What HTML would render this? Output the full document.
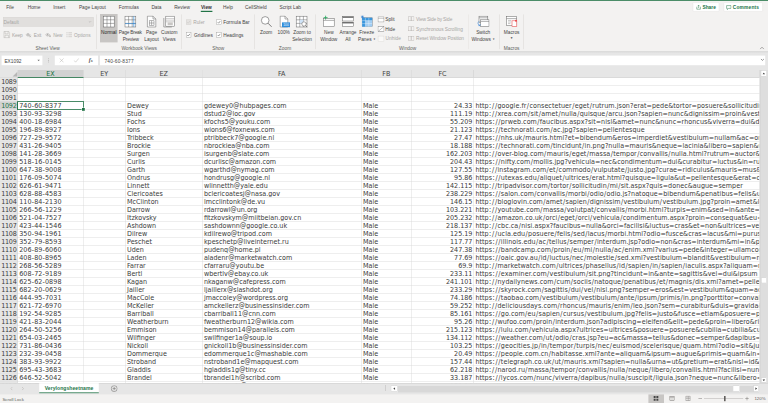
<!DOCTYPE html><html><head><meta charset="utf-8"><title>Excel</title><style>
*{box-sizing:border-box;margin:0;padding:0}
html,body{width:768px;height:403px;overflow:hidden;background:#f3f2f1}
#app{position:absolute;left:0;top:0;width:1920px;height:1008px;transform:scale(0.4);transform-origin:0 0;font-family:"Liberation Sans",sans-serif;font-size:12px;color:#444;background:#e6e6e6;overflow:hidden}
.abs{position:absolute}
#ribbon{position:absolute;left:0;top:0;width:1920px;height:128px;background:#f3f2f1;border-top:2.3px solid #217346}
#ribshadow{position:absolute;left:0;top:128px;width:1920px;height:5px;background:linear-gradient(#d6d6d6,#e6e6e6)}
.tab{position:absolute;top:11px;height:16px;line-height:16px;width:120px;margin-left:-60px;text-align:center;font-size:12px;color:#444;white-space:nowrap}
.tab.sel{color:#333;font-weight:bold}
.lbl{position:absolute;height:16px;line-height:16px;width:140px;margin-left:-70px;text-align:center;font-size:12px;color:#444;white-space:nowrap}
.lt{position:absolute;height:16px;line-height:16px;font-size:12px;color:#444;white-space:nowrap}
.dis{color:#a8a6a4}
.glabel{position:absolute;top:112px;height:16px;line-height:16px;width:160px;margin-left:-80px;text-align:center;font-size:12px;color:#605e5c;white-space:nowrap}
.sep{position:absolute;top:36px;height:87px;width:1px;background:#d2d0ce}
.ico{position:absolute}
.cb{position:absolute;width:13px;height:13px;border:1px solid #9a9896;background:#fff}
.cb.dis{border-color:#d2d0ce;background:#e5e3e1}
#grid{position:absolute;left:0;top:175px;width:1898.5px;height:782.5px;background:#fff;overflow:hidden}
.ch{position:absolute;top:0;height:18px;line-height:19px;text-align:center;font-family:"DejaVu Sans",sans-serif;font-size:16px;color:#444;background:#e6e6e6;border-right:1px solid #c6c6c6}
.rh{position:absolute;left:0;width:44px;height:20px;line-height:20px;text-align:center;font-family:"DejaVu Sans",sans-serif;font-size:16px;color:#3a3a3a;background:#e6e6e6;border-bottom:1px solid #c6c6c6;letter-spacing:-0.6px}
.c{position:absolute;height:20px;line-height:21px;font-family:"DejaVu Sans",sans-serif;font-size:16px;color:#3a3a3a;white-space:nowrap;overflow:hidden}
.c i{font-style:normal;letter-spacing:1.9px;margin-left:.95px;margin-right:-.95px}
.vl{position:absolute;top:19px;width:1px;height:770px;background:#d4d4d4}
.hl{position:absolute;left:44px;height:1px;width:1860px;background:#d4d4d4}
</style></head><body><div id="app">
<div id="ribbon"></div><div id="ribshadow"></div>
<div class="tab" style="left:25.0px">File</div>
<div class="tab" style="left:85.2px">Home</div>
<div class="tab" style="left:148.1px">Insert</div>
<div class="tab" style="left:231.0px">Page Layout</div>
<div class="tab" style="left:322.2px">Formulas</div>
<div class="tab" style="left:391.2px">Data</div>
<div class="tab" style="left:455.0px">Review</div>
<div class="tab sel" style="left:516.0px">View</div>
<div class="tab" style="left:570.0px">Help</div>
<div class="tab" style="left:639.8px">CellShield</div>
<div class="tab" style="left:725.6px">Script Lab</div>
<div class="abs" style="left:502px;top:26.800px;width:29px;height:3px;background:#217346"></div>
<div class="abs" style="left:1732px;top:6px;width:66px;height:23px;background:#fff;border:1px solid #e1dfdd;border-radius:2px"></div>
<svg class="ico" style="left:1740px;top:11px" width="14" height="14" viewBox="0 0 14 14"><path d="M2 6v6h9V6M6.5 9V2M4 4.5L6.5 2 9 4.5" fill="none" stroke="#217346" stroke-width="1.2"/></svg>
<div class="lt" style="left:1756px;top:11px;color:#217346;font-weight:bold;letter-spacing:0.1px">Share</div>
<div class="abs" style="left:1809px;top:6px;width:98px;height:23px;background:#fff;border:1px solid #e1dfdd;border-radius:2px"></div>
<svg class="ico" style="left:1814.500px;top:12px" width="14" height="14" viewBox="0 0 14 14"><path d="M1.5 2h11v7h-6l-3 3v-3h-2z" fill="none" stroke="#217346" stroke-width="1.2"/></svg>
<div class="lt" style="left:1832px;top:11px;color:#217346;font-weight:bold;letter-spacing:0.5px">Comments</div>
<svg class="ico" style="left:1899px;top:116px" width="12" height="8" viewBox="0 0 12 8"><path d="M1 7l5-5 5 5" fill="none" stroke="#605e5c" stroke-width="1.3"/></svg>
<div class="abs" style="left:8px;top:43px;width:226px;height:23px;background:#e1dfdd;border:1px solid #d2d0ce"></div>
<div class="lt dis" style="left:9px;top:47px">Default</div>
<svg class="ico" style="left:221px;top:52px" width="8" height="5" viewBox="0 0 8 5"><path d="M0.5 0.5l3.5 3.5 3.5-3.5" fill="none" stroke="#a19f9d" stroke-width="1"/></svg>
<svg class="ico" style="left:8px;top:77px" width="18" height="19" viewBox="0 0 16 16" preserveAspectRatio="none"><path d="M1.5 1.5h11l2 2v11h-13z M4 1.5v5h7v-5 M4 14.5v-5h8v5" fill="none" stroke="#b3b0ad" stroke-width="1"/></svg>
<div class="lt dis" style="left:30px;top:81px;letter-spacing:-0.4px">Keep</div>
<svg class="ico" style="left:64px;top:80px" width="16" height="14" viewBox="0 0 16 14"><path d="M1 7c2-4 8-4 10 0-2 4-8 4-10 0z M9 9l5 4 M14 9l-5 4" fill="none" stroke="#a8a6a4" stroke-width="1.5"/><circle cx="6" cy="7" r="1.8" fill="#a8a6a4"/></svg>
<div class="lt dis" style="left:84.500px;top:81px;letter-spacing:-0.3px">Exit</div>
<svg class="ico" style="left:113px;top:80px" width="16" height="14" viewBox="0 0 16 14"><path d="M1 7c2-4 8-4 10 0-2 4-8 4-10 0z M12 8v5 M9.5 10.5h5" fill="none" stroke="#a8a6a4" stroke-width="1.5"/><circle cx="6" cy="7" r="1.8" fill="#a8a6a4"/></svg>
<div class="lt dis" style="left:133px;top:81px;letter-spacing:-0.5px">New</div>
<svg class="ico" style="left:165px;top:80px" width="16" height="14" viewBox="0 0 16 14"><path d="M1 2h3 M6 2h9 M1 7h3 M6 7h9 M1 12h3 M6 12h9" fill="none" stroke="#b3b0ad" stroke-width="1.4"/></svg>
<div class="lt dis" style="left:185px;top:81px">Options</div>
<div class="glabel" style="left:119px">Sheet View</div>
<div class="sep" style="left:240.5px"></div>
<div class="abs" style="left:250px;top:35px;width:44px;height:71px;background:#c8c6c4"></div>
<svg class="ico" style="left:256px;top:38px" width="32" height="32" viewBox="0 0 32 32"><rect x="2.5" y="2.5" width="27" height="27" fill="#fff" stroke="#5e5e5e" stroke-width="1.2"/><path d="M2.5 11.5h27M2.5 20.5h27M11.5 2.5v27M20.5 2.5v27" stroke="#5e5e5e" stroke-width="1.2" fill="none"/></svg>
<div class="lbl" style="left:272px;top:72px;color:#252423">Normal</div>
<svg class="ico" style="left:310px;top:38px" width="32" height="32" viewBox="0 0 32 32"><rect x="2.5" y="2.5" width="27" height="27" fill="#fff" stroke="#5e5e5e" stroke-width="1.2"/><path d="M2.5 11.5h27M2.5 20.5h27M11.5 2.5v27M20.5 2.5v27" stroke="#5e5e5e" stroke-width="1.2" fill="none"/><path d="M2.5 21h27M24.500 2.5v27" stroke="#2b88d8" stroke-width="1.6" fill="none"/></svg>
<div class="lbl" style="left:325.6px;top:72px;letter-spacing:-0.5px">Page Break</div><div class="lbl" style="left:327px;top:90px;letter-spacing:-0.35px">Preview</div>
<svg class="ico" style="left:363px;top:38px" width="32" height="32" viewBox="0 0 32 32"><path d="M5.5 2.5h14l7 7v20h-21z" fill="#fff" stroke="#5e5e5e" stroke-width="1.2"/><path d="M19.5 2.5v7h7" fill="none" stroke="#5e5e5e" stroke-width="1.2"/><rect x="10" y="14" width="12" height="11" fill="none" stroke="#5e5e5e" stroke-width="1.1"/><path d="M10 19.5h12M16 14v11" stroke="#5e5e5e" stroke-width="1.1"/></svg>
<div class="lbl" style="left:378.8px;top:72px">Page</div><div class="lbl" style="left:378.8px;top:90px">Layout</div>
<svg class="ico" style="left:407px;top:38px" width="32" height="32" viewBox="0 0 32 32"><rect x="7.5" y="2.5" width="22" height="25" fill="#fff" stroke="#5e5e5e" stroke-width="1.2"/><path d="M7.5 8.5h22M7.5 12.5h22M7.5 16.5h22" stroke="#8a8886" stroke-width="1"/><path d="M2.5 7v22.5h20" fill="none" stroke="#5e5e5e" stroke-width="1.2"/><rect x="12" y="18" width="13" height="7" fill="#c8c6c4"/></svg>
<div class="lbl" style="left:423px;top:72px">Custom</div><div class="lbl" style="left:423px;top:90px">Views</div>
<div class="glabel" style="left:348px">Workbook Views</div>
<div class="sep" style="left:453px"></div>
<div class="cb dis" style="left:465px;top:49px"></div><svg class="ico" style="left:467px;top:51px" width="9" height="9" viewBox="0 0 9 9"><path d="M1 4.5l2.5 2.5 4.5-5.5" fill="none" stroke="#c8c6c4" stroke-width="1.3"/></svg>
<div class="lt dis" style="left:483px;top:47px">Ruler</div>
<div class="cb" style="left:465px;top:81px"></div><svg class="ico" style="left:467px;top:83px" width="9" height="9" viewBox="0 0 9 9"><path d="M1 4.5l2.5 2.5 4.5-5.5" fill="none" stroke="#444" stroke-width="1.3"/></svg>
<div class="lt" style="left:485px;top:81px">Gridlines</div>
<div class="cb" style="left:541px;top:49px"></div><svg class="ico" style="left:543px;top:51px" width="9" height="9" viewBox="0 0 9 9"><path d="M1 4.5l2.5 2.5 4.5-5.5" fill="none" stroke="#444" stroke-width="1.3"/></svg>
<div class="lt" style="left:558px;top:47px">Formula Bar</div>
<div class="cb" style="left:541px;top:81px"></div><svg class="ico" style="left:543px;top:83px" width="9" height="9" viewBox="0 0 9 9"><path d="M1 4.5l2.5 2.5 4.5-5.5" fill="none" stroke="#444" stroke-width="1.3"/></svg>
<div class="lt" style="left:558px;top:81px">Headings</div>
<div class="glabel" style="left:545.6px">Show</div>
<div class="sep" style="left:636px"></div>
<svg class="ico" style="left:650px;top:38px" width="32" height="32" viewBox="0 0 32 32"><circle cx="13" cy="13" r="9.5" fill="#fff" stroke="#5e5e5e" stroke-width="1.5"/><path d="M20 20l9 9" stroke="#5e5e5e" stroke-width="2"/></svg>
<div class="lbl" style="left:665.6px;top:72px">Zoom</div>
<svg class="ico" style="left:694px;top:38px" width="32" height="32" viewBox="0 0 32 32"><path d="M6.5 2.5h12l7 7v20h-19z" fill="#fff" stroke="#5e5e5e" stroke-width="1.2"/><path d="M18.5 2.5v7h7" fill="none" stroke="#5e5e5e" stroke-width="1.2"/><rect x="11" y="18" width="20" height="12" fill="#2f8ddb"/><text x="21" y="27.5" font-size="8" font-family="Liberation Sans, sans-serif" fill="#fff" text-anchor="middle">100</text></svg>
<div class="lbl" style="left:709.4px;top:72px">100%</div>
<svg class="ico" style="left:738px;top:38px" width="32" height="32" viewBox="0 0 32 32"><rect x="2.5" y="2.5" width="27" height="27" fill="#fff" stroke="#5e5e5e" stroke-width="1.2"/><path d="M2.5 11.5h27M2.5 20.5h27M11.5 2.5v27M20.5 2.5v27" stroke="#5e5e5e" stroke-width="1.2" fill="none"/><rect x="11.5" y="11.5" width="9" height="9" fill="#cfe3f7"/><circle cx="22" cy="22" r="5.5" fill="#fff" stroke="#5e5e5e" stroke-width="1.3"/><path d="M26 26l4 4" stroke="#5e5e5e" stroke-width="1.8"/></svg>
<div class="lbl" style="left:755px;top:72px">Zoom to</div><div class="lbl" style="left:755px;top:90px">Selection</div>
<div class="glabel" style="left:712.5px">Zoom</div>
<div class="sep" style="left:788px"></div>
<svg class="ico" style="left:806px;top:38px" width="32" height="32" viewBox="0 0 32 32"><rect x="2.5" y="8.5" width="27" height="20" fill="#fff" stroke="#5e5e5e" stroke-width="1.2"/><path d="M2.5 13h27" stroke="#5e5e5e" stroke-width="1.2"/><path d="M8 1v10M3 6h10" stroke="#23a55a" stroke-width="2"/></svg>
<div class="lbl" style="left:822px;top:72px">New</div><div class="lbl" style="left:822px;top:90px">Window</div>
<svg class="ico" style="left:854px;top:38px" width="32" height="32" viewBox="0 0 32 32"><rect x="2.5" y="3.5" width="27" height="11" fill="#fff" stroke="#5e5e5e" stroke-width="1.2"/><rect x="2.5" y="3.5" width="27" height="3" fill="#5e5e5e"/><rect x="2.5" y="17.5" width="27" height="11" fill="#fff" stroke="#5e5e5e" stroke-width="1.2"/><rect x="2.5" y="17.5" width="27" height="3" fill="#5e5e5e"/></svg>
<div class="lbl" style="left:870px;top:72px">Arrange</div><div class="lbl" style="left:870px;top:90px">All</div>
<svg class="ico" style="left:901px;top:38px" width="32" height="32" viewBox="0 0 32 32"><rect x="4.5" y="6.5" width="25" height="22" fill="#fff" stroke="#5e5e5e" stroke-width="1.2"/><rect x="4.5" y="6.5" width="25" height="22" fill="#9fcdf3"/><rect x="4.5" y="6.5" width="25" height="7" fill="#3a96dd"/><rect x="4.5" y="6.5" width="8" height="22" fill="#3a96dd"/><path d="M4.5 13.5h25M4.5 21h25M12.5 6.5v22M21 6.5v22" stroke="#fff" stroke-width="1" opacity=".9"/><path d="M5 0v8M1 4h8M2 1l6 6M8 1l-6 6" stroke="#2b7cd3" stroke-width="1.2"/></svg>
<div class="lbl" style="left:917px;top:72px">Freeze</div><div class="lbl" style="left:917px;top:90px">Panes <span style="font-size:7px;vertical-align:1px">&#9660;</span></div>
<svg class="ico" style="left:944px;top:41px" width="17" height="15" viewBox="0 0 17 15"><rect x="1" y="1" width="15" height="13" fill="#fff" stroke="#5e5e5e"/><path d="M1 4.500h15" stroke="#5e5e5e"/></svg>
<div class="lt" style="left:963px;top:41px">Split</div>
<svg class="ico" style="left:944px;top:65px" width="17" height="15" viewBox="0 0 17 15"><rect x="1" y="1" width="15" height="13" fill="#fff" stroke="#5e5e5e"/><path d="M2 13l13-11" stroke="#5e5e5e"/></svg>
<div class="lt" style="left:963px;top:66px">Hide</div>
<svg class="ico" style="left:944px;top:89px" width="17" height="15" viewBox="0 0 17 15"><rect x="1" y="1" width="15" height="13" fill="#faf9f8" stroke="#c8c6c4"/></svg>
<div class="lt dis" style="left:964px;top:88px">Unhide</div>
<svg class="ico" style="left:1020px;top:40px" width="16" height="14" viewBox="0 0 16 14"><rect x="1" y="2" width="6.5" height="10" fill="none" stroke="#b3b0ad"/><rect x="8.5" y="2" width="6.5" height="10" fill="none" stroke="#b3b0ad"/></svg>
<div class="lt dis" style="left:1040px;top:41px;letter-spacing:-0.36px">View Side by Side</div>
<svg class="ico" style="left:1020px;top:65px" width="16" height="14" viewBox="0 0 16 14"><rect x="1" y="2" width="6.5" height="10" fill="none" stroke="#b3b0ad"/><rect x="8.5" y="2" width="6.5" height="10" fill="none" stroke="#b3b0ad"/></svg>
<div class="lt dis" style="left:1040px;top:66px;letter-spacing:-0.12px">Synchronous Scrolling</div>
<svg class="ico" style="left:1020px;top:89px" width="16" height="14" viewBox="0 0 16 14"><rect x="1" y="2" width="6.5" height="10" fill="none" stroke="#b3b0ad"/><rect x="8.5" y="2" width="6.5" height="10" fill="none" stroke="#b3b0ad"/></svg>
<div class="lt dis" style="left:1040px;top:88px;letter-spacing:-0.17px">Reset Window Position</div>
<div class="sep" style="left:1170.5px;background:#e1dfdd"></div>
<svg class="ico" style="left:1192px;top:38px" width="32" height="32" viewBox="0 0 32 32"><rect x="5.5" y="2.5" width="22" height="16" fill="#fff" stroke="#5e5e5e" stroke-width="1.2"/><path d="M5.5 6.500h22" stroke="#5e5e5e" stroke-width="1.2"/><rect x="9.500" y="11.5" width="21" height="17" fill="#fff" stroke="#5e5e5e" stroke-width="1.2"/><path d="M9.5 15.5h21" stroke="#5e5e5e" stroke-width="1.2"/><path d="M6 15c-4 3-4 8 1 11M4 26h4v-4" fill="none" stroke="#2b7cd3" stroke-width="1.5"/></svg>
<div class="lbl" style="left:1208px;top:72px">Switch</div><div class="lbl" style="left:1208px;top:90px">Windows <span style="font-size:7px;vertical-align:1px">&#9660;</span></div>
<div class="glabel" style="left:1019px">Window</div>
<div class="sep" style="left:1248px"></div>
<svg class="ico" style="left:1263px;top:38px" width="32" height="32" viewBox="0 0 32 32"><rect x="3.5" y="3.5" width="25" height="22" fill="#fff" stroke="#5e5e5e" stroke-width="1.2"/><path d="M3.5 8.5h25" stroke="#5e5e5e" stroke-width="1.2"/><path d="M7 13h8M7 17h8M7 21h6" stroke="#8a8886" stroke-width="1.2"/><rect x="17" y="14" width="12" height="14" fill="#fff" stroke="#e8484a" stroke-width="1.4"/><circle cx="27" cy="14" r="2.5" fill="#e8484a"/></svg>
<div class="lbl" style="left:1279px;top:72px">Macros</div><div class="lbl" style="left:1279px;top:88px;font-size:8px">&#9660;</div>
<div class="glabel" style="left:1279px">Macros</div>
<div class="sep" style="left:1307.5px"></div>
<div class="abs" style="left:4px;top:138.500px;width:102px;height:24.500px;background:#fff"></div>
<div class="lt" style="left:11px;top:145px;font-size:12px;color:#444">EX1092</div>
<svg class="ico" style="left:93px;top:149px" width="7" height="4" viewBox="0 0 7 4"><path d="M0 0h7l-3.500 4z" fill="#777"/></svg>
<div class="abs" style="left:120px;top:146px;width:2px;height:2px;background:#b0aeac;box-shadow:0 4px 0 #b0aeac,0 8px 0 #b0aeac"></div>
<div class="abs" style="left:137px;top:138.500px;width:108px;height:24.500px;background:#fff"></div>
<svg class="ico" style="left:148px;top:145px" width="12" height="12" viewBox="0 0 12 12"><path d="M1 1l10 10M11 1l-10 10" stroke="#b3b0ad" stroke-width="1.2"/></svg>
<svg class="ico" style="left:184px;top:145px" width="14" height="12" viewBox="0 0 14 12"><path d="M1 6l4 4.500l8-9.500" fill="none" stroke="#b3b0ad" stroke-width="1.2"/></svg>
<div class="lt" style="left:222px;top:142px;font-family:'Liberation Serif',serif;font-style:italic;font-weight:bold;font-size:15px;color:#555">f<span style="font-size:10px">x</span></div>
<div class="abs" style="left:250px;top:138.500px;width:1663px;height:24.500px;background:#fff"></div>
<div class="lt" style="left:261px;top:145px;font-size:12px;letter-spacing:0.5px;color:#444">740-60-8377</div>
<svg class="ico" style="left:1901px;top:146px" width="10" height="7" viewBox="0 0 10 7"><path d="M1 1l4 4 4-4" fill="none" stroke="#444" stroke-width="1.4"/></svg>
<div id="grid">
<div class="abs" style="left:0;top:0;width:1900px;height:19px;background:#e6e6e6;border-bottom:1px solid #b4b4b4"></div>
<svg class="ico" style="left:30.500px;top:4px" width="13" height="13" viewBox="0 0 13 13"><path d="M13 0v13h-13z" fill="#b7b7b7"/></svg>
<div class="ch" style="left:44px;width:165px;background:#d2d2d2;color:#217346;">EX</div>
<div class="ch" style="left:209px;width:104.5px;">EY</div>
<div class="ch" style="left:313.5px;width:192.25px;">EZ</div>
<div class="ch" style="left:505.75px;width:398.0px;">FA</div>
<div class="ch" style="left:903.75px;width:125.0px;">FB</div>
<div class="ch" style="left:1028.75px;width:155.75px;">FC</div>
<div class="ch" style="left:1184.5px;width:715.5px;"></div>
<div class="abs" style="left:44px;top:18.400px;width:165px;height:1.900px;background:#217346"></div>
<div class="rh" style="top:19px;">1089</div>
<div class="rh" style="top:39px;">1090</div>
<div class="rh" style="top:59px;">1091</div>
<div class="rh" style="top:79px;background:#d2d2d2;color:#217346;">1092</div>
<div class="rh" style="top:99px;">1093</div>
<div class="rh" style="top:119px;">1094</div>
<div class="rh" style="top:139px;">1095</div>
<div class="rh" style="top:159px;">1096</div>
<div class="rh" style="top:179px;">1097</div>
<div class="rh" style="top:199px;">1098</div>
<div class="rh" style="top:219px;">1099</div>
<div class="rh" style="top:239px;">1100</div>
<div class="rh" style="top:259px;">1101</div>
<div class="rh" style="top:279px;">1102</div>
<div class="rh" style="top:299px;">1103</div>
<div class="rh" style="top:319px;">1104</div>
<div class="rh" style="top:339px;">1105</div>
<div class="rh" style="top:359px;">1106</div>
<div class="rh" style="top:379px;">1107</div>
<div class="rh" style="top:399px;">1108</div>
<div class="rh" style="top:419px;">1109</div>
<div class="rh" style="top:439px;">1110</div>
<div class="rh" style="top:459px;">1111</div>
<div class="rh" style="top:479px;">1112</div>
<div class="rh" style="top:499px;">1113</div>
<div class="rh" style="top:519px;">1114</div>
<div class="rh" style="top:539px;">1115</div>
<div class="rh" style="top:559px;">1116</div>
<div class="rh" style="top:579px;">1117</div>
<div class="rh" style="top:599px;">1118</div>
<div class="rh" style="top:619px;">1119</div>
<div class="rh" style="top:639px;">1120</div>
<div class="rh" style="top:659px;">1121</div>
<div class="rh" style="top:679px;">1122</div>
<div class="rh" style="top:699px;">1123</div>
<div class="rh" style="top:719px;">1124</div>
<div class="rh" style="top:739px;">1125</div>
<div class="rh" style="top:759px;">1126</div>
<div class="rh" style="top:779px;">1127</div>
<div class="abs" style="left:43px;top:19px;width:1px;height:770px;background:#c6c6c6"></div>
<div class="abs" style="left:42.5px;top:79px;width:2.5px;height:20px;background:#217346"></div>
<div class="hl" style="top:38px"></div>
<div class="hl" style="top:58px"></div>
<div class="hl" style="top:78px"></div>
<div class="hl" style="top:98px"></div>
<div class="hl" style="top:118px"></div>
<div class="hl" style="top:138px"></div>
<div class="hl" style="top:158px"></div>
<div class="hl" style="top:178px"></div>
<div class="hl" style="top:198px"></div>
<div class="hl" style="top:218px"></div>
<div class="hl" style="top:238px"></div>
<div class="hl" style="top:258px"></div>
<div class="hl" style="top:278px"></div>
<div class="hl" style="top:298px"></div>
<div class="hl" style="top:318px"></div>
<div class="hl" style="top:338px"></div>
<div class="hl" style="top:358px"></div>
<div class="hl" style="top:378px"></div>
<div class="hl" style="top:398px"></div>
<div class="hl" style="top:418px"></div>
<div class="hl" style="top:438px"></div>
<div class="hl" style="top:458px"></div>
<div class="hl" style="top:478px"></div>
<div class="hl" style="top:498px"></div>
<div class="hl" style="top:518px"></div>
<div class="hl" style="top:538px"></div>
<div class="hl" style="top:558px"></div>
<div class="hl" style="top:578px"></div>
<div class="hl" style="top:598px"></div>
<div class="hl" style="top:618px"></div>
<div class="hl" style="top:638px"></div>
<div class="hl" style="top:658px"></div>
<div class="hl" style="top:678px"></div>
<div class="hl" style="top:698px"></div>
<div class="hl" style="top:718px"></div>
<div class="hl" style="top:738px"></div>
<div class="hl" style="top:758px"></div>
<div class="hl" style="top:778px"></div>
<div class="hl" style="top:798px"></div>
<div class="vl" style="left:208px"></div>
<div class="vl" style="left:312.5px"></div>
<div class="vl" style="left:504.75px"></div>
<div class="vl" style="left:902.75px"></div>
<div class="vl" style="left:1027.75px"></div>
<div class="vl" style="left:1183.5px"></div>
<div class="c" style="left:44px;top:79px;width:164px;padding-left:4px;letter-spacing:0.25px;">740-60-8377</div>
<div class="c" style="left:313.5px;top:79px;width:191.25px;padding-left:4px;">Dewey</div>
<div class="c" style="left:505.75px;top:79px;width:397.0px;padding-left:4px;">gdewey0@hubpages.com</div>
<div class="c" style="left:903.75px;top:79px;width:124.0px;padding-left:4px;">Male</div>
<div class="c" style="left:1028.75px;top:79px;width:154.75px;padding-right:2.5px;text-align:right;">24.33</div>
<div class="c" style="left:1184.5px;top:79px;width:714.0px;padding-left:4px;letter-spacing:0.11px;">http<i>://</i>google.fr<i>/</i>consectetuer<i>/</i>eget<i>/</i>rutrum.json?erat=pede&amp;tortor=posuere&amp;sollicitudin=eget</div>
<div class="c" style="left:44px;top:99px;width:164px;padding-left:4px;letter-spacing:0.25px;">130-93-3298</div>
<div class="c" style="left:313.5px;top:99px;width:191.25px;padding-left:4px;">Stud</div>
<div class="c" style="left:505.75px;top:99px;width:397.0px;padding-left:4px;">dstud2@loc.gov</div>
<div class="c" style="left:903.75px;top:99px;width:124.0px;padding-left:4px;">Male</div>
<div class="c" style="left:1028.75px;top:99px;width:154.75px;padding-right:2.5px;text-align:right;">111.19</div>
<div class="c" style="left:1184.5px;top:99px;width:714.0px;padding-left:4px;letter-spacing:0.11px;">http<i>://</i>xrea.com<i>/</i>sit<i>/</i>amet<i>/</i>nulla<i>/</i>quisque<i>/</i>arcu.json?sapien=nunc&amp;dignissim=proin&amp;vestibulum=ac</div>
<div class="c" style="left:44px;top:119px;width:164px;padding-left:4px;letter-spacing:0.25px;">400-18-6984</div>
<div class="c" style="left:313.5px;top:119px;width:191.25px;padding-left:4px;">Fochs</div>
<div class="c" style="left:505.75px;top:119px;width:397.0px;padding-left:4px;">kfochs5@youku.com</div>
<div class="c" style="left:903.75px;top:119px;width:124.0px;padding-left:4px;">Male</div>
<div class="c" style="left:1028.75px;top:119px;width:154.75px;padding-right:2.5px;text-align:right;">55.209</div>
<div class="c" style="left:1184.5px;top:119px;width:714.0px;padding-left:4px;letter-spacing:0.11px;">https<i>://</i>prweb.com<i>/</i>faucibus.aspx?sit=nisl&amp;amet=nunc&amp;nunc=rhoncus&amp;viverra=dui&amp;dapibus=at</div>
<div class="c" style="left:44px;top:139px;width:164px;padding-left:4px;letter-spacing:0.25px;">196-89-8927</div>
<div class="c" style="left:313.5px;top:139px;width:191.25px;padding-left:4px;">Ions</div>
<div class="c" style="left:505.75px;top:139px;width:397.0px;padding-left:4px;">wions6@foxnews.com</div>
<div class="c" style="left:903.75px;top:139px;width:124.0px;padding-left:4px;">Male</div>
<div class="c" style="left:1028.75px;top:139px;width:154.75px;padding-right:2.5px;text-align:right;">21.123</div>
<div class="c" style="left:1184.5px;top:139px;width:714.0px;padding-left:4px;letter-spacing:0.11px;">https<i>://</i>technorati.com<i>/</i>ac.jpg?sapien=pellentesque</div>
<div class="c" style="left:44px;top:159px;width:164px;padding-left:4px;letter-spacing:0.25px;">727-29-9572</div>
<div class="c" style="left:313.5px;top:159px;width:191.25px;padding-left:4px;">Tribbeck</div>
<div class="c" style="left:505.75px;top:159px;width:397.0px;padding-left:4px;">ptribbeck7@google.nl</div>
<div class="c" style="left:903.75px;top:159px;width:124.0px;padding-left:4px;">Male</div>
<div class="c" style="left:1028.75px;top:159px;width:154.75px;padding-right:2.5px;text-align:right;">27.47</div>
<div class="c" style="left:1184.5px;top:159px;width:714.0px;padding-left:4px;letter-spacing:0.11px;">https<i>://</i>nhs.uk<i>/</i>mauris.html?et=bibendum&amp;eros=imperdiet&amp;vestibulum=nullam&amp;ac=orci&amp;in=est</div>
<div class="c" style="left:44px;top:179px;width:164px;padding-left:4px;letter-spacing:0.25px;">431-26-9405</div>
<div class="c" style="left:313.5px;top:179px;width:191.25px;padding-left:4px;">Brockie</div>
<div class="c" style="left:505.75px;top:179px;width:397.0px;padding-left:4px;">nbrockiea@nba.com</div>
<div class="c" style="left:903.75px;top:179px;width:124.0px;padding-left:4px;">Male</div>
<div class="c" style="left:1028.75px;top:179px;width:154.75px;padding-right:2.5px;text-align:right;">18.188</div>
<div class="c" style="left:1184.5px;top:179px;width:714.0px;padding-left:4px;letter-spacing:0.11px;">https<i>://</i>technorati.com<i>/</i>tincidunt<i>/</i>in.png?nulla=mauris&amp;neque=lacinia&amp;libero=sapien&amp;ut=nunc</div>
<div class="c" style="left:44px;top:199px;width:164px;padding-left:4px;letter-spacing:0.25px;">141-28-3669</div>
<div class="c" style="left:313.5px;top:199px;width:191.25px;padding-left:4px;">Surgen</div>
<div class="c" style="left:505.75px;top:199px;width:397.0px;padding-left:4px;">isurgenb@slate.com</div>
<div class="c" style="left:903.75px;top:199px;width:124.0px;padding-left:4px;">Male</div>
<div class="c" style="left:1028.75px;top:199px;width:154.75px;padding-right:2.5px;text-align:right;">162.203</div>
<div class="c" style="left:1184.5px;top:199px;width:714.0px;padding-left:4px;letter-spacing:0.11px;">http<i>://</i>over-blog.com<i>/</i>mauris<i>/</i>eget<i>/</i>massa<i>/</i>tempor<i>/</i>convallis<i>/</i>nulla.html?rutrum=auctor&amp;sed=ut</div>
<div class="c" style="left:44px;top:219px;width:164px;padding-left:4px;letter-spacing:0.25px;">518-16-0145</div>
<div class="c" style="left:313.5px;top:219px;width:191.25px;padding-left:4px;">Curlis</div>
<div class="c" style="left:505.75px;top:219px;width:397.0px;padding-left:4px;">dcurlisc@amazon.com</div>
<div class="c" style="left:903.75px;top:219px;width:124.0px;padding-left:4px;">Male</div>
<div class="c" style="left:1028.75px;top:219px;width:154.75px;padding-right:2.5px;text-align:right;">204.43</div>
<div class="c" style="left:1184.5px;top:219px;width:714.0px;padding-left:4px;letter-spacing:0.11px;">https<i>://</i>nifty.com<i>/</i>mollis.jpg?vehicula=nec&amp;condimentum=dui&amp;curabitur=luctus&amp;in=rutrum&amp;ac</div>
<div class="c" style="left:44px;top:239px;width:164px;padding-left:4px;letter-spacing:0.25px;">647-38-9008</div>
<div class="c" style="left:313.5px;top:239px;width:191.25px;padding-left:4px;">Garth</div>
<div class="c" style="left:505.75px;top:239px;width:397.0px;padding-left:4px;">wgarthd@nymag.com</div>
<div class="c" style="left:903.75px;top:239px;width:124.0px;padding-left:4px;">Male</div>
<div class="c" style="left:1028.75px;top:239px;width:154.75px;padding-right:2.5px;text-align:right;">127.55</div>
<div class="c" style="left:1184.5px;top:239px;width:714.0px;padding-left:4px;letter-spacing:0.11px;">http<i>://</i>instagram.com<i>/</i>et<i>/</i>commodo<i>/</i>vulputate<i>/</i>justo.jpg?curae=ridiculus&amp;mauris=mus&amp;nulla=ut</div>
<div class="c" style="left:44px;top:259px;width:164px;padding-left:4px;letter-spacing:0.25px;">176-09-5074</div>
<div class="c" style="left:313.5px;top:259px;width:191.25px;padding-left:4px;">Ondrus</div>
<div class="c" style="left:505.75px;top:259px;width:397.0px;padding-left:4px;">hondrusg@google.nl</div>
<div class="c" style="left:903.75px;top:259px;width:124.0px;padding-left:4px;">Male</div>
<div class="c" style="left:1028.75px;top:259px;width:154.75px;padding-right:2.5px;text-align:right;">95.86</div>
<div class="c" style="left:1184.5px;top:259px;width:714.0px;padding-left:4px;letter-spacing:0.11px;">https<i>://</i>utexas.edu<i>/</i>aliquet<i>/</i>ultrices<i>/</i>erat.html?quisque=ligula&amp;ut=pellentesque&amp;erat=curabitur</div>
<div class="c" style="left:44px;top:279px;width:164px;padding-left:4px;letter-spacing:0.25px;">626-61-9471</div>
<div class="c" style="left:313.5px;top:279px;width:191.25px;padding-left:4px;">Linnett</div>
<div class="c" style="left:505.75px;top:279px;width:397.0px;padding-left:4px;">wlinnetth@yale.edu</div>
<div class="c" style="left:903.75px;top:279px;width:124.0px;padding-left:4px;">Male</div>
<div class="c" style="left:1028.75px;top:279px;width:154.75px;padding-right:2.5px;text-align:right;">142.115</div>
<div class="c" style="left:1184.5px;top:279px;width:714.0px;padding-left:4px;letter-spacing:0.11px;">http<i>://</i>tripadvisor.com<i>/</i>tortor<i>/</i>sollicitudin<i>/</i>mi<i>/</i>sit.aspx?quis=donec&amp;augue=semper</div>
<div class="c" style="left:44px;top:299px;width:164px;padding-left:4px;letter-spacing:0.25px;">628-88-4583</div>
<div class="c" style="left:313.5px;top:299px;width:191.25px;padding-left:4px;">Clericoates</div>
<div class="c" style="left:505.75px;top:299px;width:397.0px;padding-left:4px;">bclericoatesj@nasa.gov</div>
<div class="c" style="left:903.75px;top:299px;width:124.0px;padding-left:4px;">Male</div>
<div class="c" style="left:1028.75px;top:299px;width:154.75px;padding-right:2.5px;text-align:right;">238.229</div>
<div class="c" style="left:1184.5px;top:299px;width:714.0px;padding-left:4px;letter-spacing:0.11px;">https<i>://</i>salon.com<i>/</i>convallis<i>/</i>morbi<i>/</i>odio<i>/</i>odio.js?natoque=bibendum&amp;penatibus=felis&amp;ut=eget</div>
<div class="c" style="left:44px;top:319px;width:164px;padding-left:4px;letter-spacing:0.25px;">110-84-2130</div>
<div class="c" style="left:313.5px;top:319px;width:191.25px;padding-left:4px;">McClinton</div>
<div class="c" style="left:505.75px;top:319px;width:397.0px;padding-left:4px;">lmcclintonk@de.vu</div>
<div class="c" style="left:903.75px;top:319px;width:124.0px;padding-left:4px;">Male</div>
<div class="c" style="left:1028.75px;top:319px;width:154.75px;padding-right:2.5px;text-align:right;">146.15</div>
<div class="c" style="left:1184.5px;top:319px;width:714.0px;padding-left:4px;letter-spacing:0.11px;">http<i>://</i>bloglovin.com<i>/</i>amet<i>/</i>sapien<i>/</i>dignissim<i>/</i>vestibulum<i>/</i>vestibulum.jpg?proin=amet&amp;lobortis=in</div>
<div class="c" style="left:44px;top:339px;width:164px;padding-left:4px;letter-spacing:0.25px;">266-56-1229</div>
<div class="c" style="left:313.5px;top:339px;width:191.25px;padding-left:4px;">Darrow</div>
<div class="c" style="left:505.75px;top:339px;width:397.0px;padding-left:4px;">rdarrowl@un.org</div>
<div class="c" style="left:903.75px;top:339px;width:124.0px;padding-left:4px;">Male</div>
<div class="c" style="left:1028.75px;top:339px;width:154.75px;padding-right:2.5px;text-align:right;">103.221</div>
<div class="c" style="left:1184.5px;top:339px;width:714.0px;padding-left:4px;letter-spacing:0.11px;">http<i>://</i>youtube.com<i>/</i>massa<i>/</i>volutpat<i>/</i>convallis<i>/</i>morbi.html?turpis=enim&amp;sed=in&amp;ante=vel&amp;in=est</div>
<div class="c" style="left:44px;top:359px;width:164px;padding-left:4px;letter-spacing:0.25px;">521-04-7527</div>
<div class="c" style="left:313.5px;top:359px;width:191.25px;padding-left:4px;">Itzkovsky</div>
<div class="c" style="left:505.75px;top:359px;width:397.0px;padding-left:4px;">fitzkovskym@miitbeian.gov.cn</div>
<div class="c" style="left:903.75px;top:359px;width:124.0px;padding-left:4px;">Male</div>
<div class="c" style="left:1028.75px;top:359px;width:154.75px;padding-right:2.5px;text-align:right;">205.232</div>
<div class="c" style="left:1184.5px;top:359px;width:714.0px;padding-left:4px;letter-spacing:0.11px;">http<i>://</i>amazon.co.uk<i>/</i>orci<i>/</i>eget<i>/</i>orci<i>/</i>vehicula<i>/</i>condimentum.aspx?proin=consequat&amp;eu=nulla&amp;ac</div>
<div class="c" style="left:44px;top:379px;width:164px;padding-left:4px;letter-spacing:0.25px;">423-44-1546</div>
<div class="c" style="left:313.5px;top:379px;width:191.25px;padding-left:4px;">Ashdown</div>
<div class="c" style="left:505.75px;top:379px;width:397.0px;padding-left:4px;">sashdownn@google.co.uk</div>
<div class="c" style="left:903.75px;top:379px;width:124.0px;padding-left:4px;">Male</div>
<div class="c" style="left:1028.75px;top:379px;width:154.75px;padding-right:2.5px;text-align:right;">218.137</div>
<div class="c" style="left:1184.5px;top:379px;width:714.0px;padding-left:4px;letter-spacing:0.11px;">http<i>://</i>cbc.ca<i>/</i>nisi.aspx?faucibus=nulla&amp;orci=facilisi&amp;luctus=cras&amp;et=non&amp;ultrices=vel&amp;augue</div>
<div class="c" style="left:44px;top:399px;width:164px;padding-left:4px;letter-spacing:0.25px;">350-94-1961</div>
<div class="c" style="left:313.5px;top:399px;width:191.25px;padding-left:4px;">Dilrew</div>
<div class="c" style="left:505.75px;top:399px;width:397.0px;padding-left:4px;">kdilrewo@tripod.com</div>
<div class="c" style="left:903.75px;top:399px;width:124.0px;padding-left:4px;">Male</div>
<div class="c" style="left:1028.75px;top:399px;width:154.75px;padding-right:2.5px;text-align:right;">125.19</div>
<div class="c" style="left:1184.5px;top:399px;width:714.0px;padding-left:4px;letter-spacing:0.11px;">http<i>://</i>ucla.edu<i>/</i>posuere<i>/</i>felis<i>/</i>sed<i>/</i>lacus<i>/</i>morbi.html?odio=fusce&amp;cras=lacus&amp;mi=purus&amp;in=est</div>
<div class="c" style="left:44px;top:419px;width:164px;padding-left:4px;letter-spacing:0.25px;">352-79-8593</div>
<div class="c" style="left:313.5px;top:419px;width:191.25px;padding-left:4px;">Peschet</div>
<div class="c" style="left:505.75px;top:419px;width:397.0px;padding-left:4px;">kpeschetp@liveinternet.ru</div>
<div class="c" style="left:903.75px;top:419px;width:124.0px;padding-left:4px;">Male</div>
<div class="c" style="left:1028.75px;top:419px;width:154.75px;padding-right:2.5px;text-align:right;">117.77</div>
<div class="c" style="left:1184.5px;top:419px;width:714.0px;padding-left:4px;letter-spacing:0.11px;">https<i>://</i>illinois.edu<i>/</i>ac<i>/</i>tellus<i>/</i>semper<i>/</i>interdum.jsp?odio=non&amp;cras=interdum&amp;mi=in&amp;porttitor</div>
<div class="c" style="left:44px;top:439px;width:164px;padding-left:4px;letter-spacing:0.25px;">206-89-6060</div>
<div class="c" style="left:313.5px;top:439px;width:191.25px;padding-left:4px;">Uden</div>
<div class="c" style="left:505.75px;top:439px;width:397.0px;padding-left:4px;">pudenq@home.pl</div>
<div class="c" style="left:903.75px;top:439px;width:124.0px;padding-left:4px;">Male</div>
<div class="c" style="left:1028.75px;top:439px;width:154.75px;padding-right:2.5px;text-align:right;">247.38</div>
<div class="c" style="left:1184.5px;top:439px;width:714.0px;padding-left:4px;letter-spacing:0.11px;">https<i>://</i>bandcamp.com<i>/</i>proin<i>/</i>eu<i>/</i>mi<i>/</i>nulla<i>/</i>ac<i>/</i>enim.xml?varius=pede&amp;integer=ullamcorper&amp;in</div>
<div class="c" style="left:44px;top:459px;width:164px;padding-left:4px;letter-spacing:0.25px;">408-80-8965</div>
<div class="c" style="left:313.5px;top:459px;width:191.25px;padding-left:4px;">Laden</div>
<div class="c" style="left:505.75px;top:459px;width:397.0px;padding-left:4px;">aladenr@marketwatch.com</div>
<div class="c" style="left:903.75px;top:459px;width:124.0px;padding-left:4px;">Male</div>
<div class="c" style="left:1028.75px;top:459px;width:154.75px;padding-right:2.5px;text-align:right;">77.69</div>
<div class="c" style="left:1184.5px;top:459px;width:714.0px;padding-left:4px;letter-spacing:0.11px;">https<i>://</i>oaic.gov.au<i>/</i>id<i>/</i>luctus<i>/</i>nec<i>/</i>molestie<i>/</i>sed.xml?vestibulum=blandit&amp;vestibulum=nulla&amp;in</div>
<div class="c" style="left:44px;top:479px;width:164px;padding-left:4px;letter-spacing:0.25px;">268-56-5289</div>
<div class="c" style="left:313.5px;top:479px;width:191.25px;padding-left:4px;">Farrar</div>
<div class="c" style="left:505.75px;top:479px;width:397.0px;padding-left:4px;">cfarraru@youtu.be</div>
<div class="c" style="left:903.75px;top:479px;width:124.0px;padding-left:4px;">Male</div>
<div class="c" style="left:1028.75px;top:479px;width:154.75px;padding-right:2.5px;text-align:right;">69.9</div>
<div class="c" style="left:1184.5px;top:479px;width:714.0px;padding-left:4px;letter-spacing:0.11px;">http<i>://</i>marketwatch.com<i>/</i>ultrices<i>/</i>phasellus<i>/</i>id<i>/</i>sapien<i>/</i>in<i>/</i>sapien<i>/</i>iaculis.aspx?aliquam=nulla&amp;in</div>
<div class="c" style="left:44px;top:499px;width:164px;padding-left:4px;letter-spacing:0.25px;">608-72-9189</div>
<div class="c" style="left:313.5px;top:499px;width:191.25px;padding-left:4px;">Bertl</div>
<div class="c" style="left:505.75px;top:499px;width:397.0px;padding-left:4px;">wbertlv@ebay.co.uk</div>
<div class="c" style="left:903.75px;top:499px;width:124.0px;padding-left:4px;">Male</div>
<div class="c" style="left:1028.75px;top:499px;width:154.75px;padding-right:2.5px;text-align:right;">233.11</div>
<div class="c" style="left:1184.5px;top:499px;width:714.0px;padding-left:4px;letter-spacing:0.11px;">https<i>://</i>examiner.com<i>/</i>vestibulum<i>/</i>sit.png?tincidunt=in&amp;ante=sagittis&amp;vel=dui&amp;ipsum</div>
<div class="c" style="left:44px;top:519px;width:164px;padding-left:4px;letter-spacing:0.25px;">625-62-0898</div>
<div class="c" style="left:313.5px;top:519px;width:191.25px;padding-left:4px;">Kagan</div>
<div class="c" style="left:505.75px;top:519px;width:397.0px;padding-left:4px;">nkaganw@cafepress.com</div>
<div class="c" style="left:903.75px;top:519px;width:124.0px;padding-left:4px;">Male</div>
<div class="c" style="left:1028.75px;top:519px;width:154.75px;padding-right:2.5px;text-align:right;">241.101</div>
<div class="c" style="left:1184.5px;top:519px;width:714.0px;padding-left:4px;letter-spacing:0.11px;">http<i>://</i>nydailynews.com<i>/</i>cum<i>/</i>sociis<i>/</i>natoque<i>/</i>penatibus<i>/</i>et<i>/</i>magnis<i>/</i>dis.xml?amet=pellentesque</div>
<div class="c" style="left:44px;top:539px;width:164px;padding-left:4px;letter-spacing:0.25px;">682-20-0629</div>
<div class="c" style="left:313.5px;top:539px;width:191.25px;padding-left:4px;">Jailler</div>
<div class="c" style="left:505.75px;top:539px;width:397.0px;padding-left:4px;">ljaillerx@slashdot.org</div>
<div class="c" style="left:903.75px;top:539px;width:124.0px;padding-left:4px;">Male</div>
<div class="c" style="left:1028.75px;top:539px;width:154.75px;padding-right:2.5px;text-align:right;">233.29</div>
<div class="c" style="left:1184.5px;top:539px;width:714.0px;padding-left:4px;letter-spacing:0.11px;">https<i>://</i>skyrock.com<i>/</i>sagittis<i>/</i>dui<i>/</i>vel<i>/</i>nisl.png?semper=eros&amp;est=vestibulum&amp;quam=ac&amp;nulla</div>
<div class="c" style="left:44px;top:559px;width:164px;padding-left:4px;letter-spacing:0.25px;">444-95-7031</div>
<div class="c" style="left:313.5px;top:559px;width:191.25px;padding-left:4px;">MacCole</div>
<div class="c" style="left:505.75px;top:559px;width:397.0px;padding-left:4px;">jmaccoley@wordpress.org</div>
<div class="c" style="left:903.75px;top:559px;width:124.0px;padding-left:4px;">Male</div>
<div class="c" style="left:1028.75px;top:559px;width:154.75px;padding-right:2.5px;text-align:right;">74.186</div>
<div class="c" style="left:1184.5px;top:559px;width:714.0px;padding-left:4px;letter-spacing:0.11px;">https<i>://</i>taobao.com<i>/</i>vestibulum<i>/</i>vestibulum<i>/</i>ante<i>/</i>ipsum<i>/</i>primis<i>/</i>in.png?porttitor=convallis&amp;in</div>
<div class="c" style="left:44px;top:579px;width:164px;padding-left:4px;letter-spacing:0.25px;">621-72-6970</div>
<div class="c" style="left:313.5px;top:579px;width:191.25px;padding-left:4px;">McKeller</div>
<div class="c" style="left:505.75px;top:579px;width:397.0px;padding-left:4px;">amckellerz@businessinsider.com</div>
<div class="c" style="left:903.75px;top:579px;width:124.0px;padding-left:4px;">Male</div>
<div class="c" style="left:1028.75px;top:579px;width:154.75px;padding-right:2.5px;text-align:right;">59.252</div>
<div class="c" style="left:1184.5px;top:579px;width:714.0px;padding-left:4px;letter-spacing:0.11px;">http<i>://</i>deliciousdays.com<i>/</i>rhoncus<i>/</i>mauris<i>/</i>enim<i>/</i>leo.json?sem=curabitur&amp;duis=gravida&amp;nulla</div>
<div class="c" style="left:44px;top:599px;width:164px;padding-left:4px;letter-spacing:0.25px;">192-54-9285</div>
<div class="c" style="left:313.5px;top:599px;width:191.25px;padding-left:4px;">Barriball</div>
<div class="c" style="left:505.75px;top:599px;width:397.0px;padding-left:4px;">cbarriball11@cnn.com</div>
<div class="c" style="left:903.75px;top:599px;width:124.0px;padding-left:4px;">Male</div>
<div class="c" style="left:1028.75px;top:599px;width:154.75px;padding-right:2.5px;text-align:right;">85.161</div>
<div class="c" style="left:1184.5px;top:599px;width:714.0px;padding-left:4px;letter-spacing:0.11px;">https<i>://</i>go.com<i>/</i>eu<i>/</i>sapien<i>/</i>cursus<i>/</i>vestibulum.jpg?felis=justo&amp;fusce=etiam&amp;posuere=praesent</div>
<div class="c" style="left:44px;top:619px;width:164px;padding-left:4px;letter-spacing:0.25px;">421-83-2044</div>
<div class="c" style="left:313.5px;top:619px;width:191.25px;padding-left:4px;">Weatherburn</div>
<div class="c" style="left:505.75px;top:619px;width:397.0px;padding-left:4px;">fweatherburn12@wikia.com</div>
<div class="c" style="left:903.75px;top:619px;width:124.0px;padding-left:4px;">Male</div>
<div class="c" style="left:1028.75px;top:619px;width:154.75px;padding-right:2.5px;text-align:right;">95.26</div>
<div class="c" style="left:1184.5px;top:619px;width:714.0px;padding-left:4px;letter-spacing:0.11px;">http<i>://</i>wufoo.com<i>/</i>proin<i>/</i>interdum.json?adipiscing=eleifend&amp;elit=pede&amp;proin=libero&amp;risus=at</div>
<div class="c" style="left:44px;top:639px;width:164px;padding-left:4px;letter-spacing:0.25px;">264-50-5256</div>
<div class="c" style="left:313.5px;top:639px;width:191.25px;padding-left:4px;">Emmison</div>
<div class="c" style="left:505.75px;top:639px;width:397.0px;padding-left:4px;">bemmison14@parallels.com</div>
<div class="c" style="left:903.75px;top:639px;width:124.0px;padding-left:4px;">Male</div>
<div class="c" style="left:1028.75px;top:639px;width:154.75px;padding-right:2.5px;text-align:right;">215.123</div>
<div class="c" style="left:1184.5px;top:639px;width:714.0px;padding-left:4px;letter-spacing:0.11px;">https<i>://</i>lulu.com<i>/</i>vehicula.aspx?ultrices=ultrices&amp;posuere=posuere&amp;cubilia=cubilia&amp;curae=at</div>
<div class="c" style="left:44px;top:659px;width:164px;padding-left:4px;letter-spacing:0.25px;">654-03-2465</div>
<div class="c" style="left:313.5px;top:659px;width:191.25px;padding-left:4px;">Wilfinger</div>
<div class="c" style="left:505.75px;top:659px;width:397.0px;padding-left:4px;">swilfinger1a@soup.io</div>
<div class="c" style="left:903.75px;top:659px;width:124.0px;padding-left:4px;">Male</div>
<div class="c" style="left:1028.75px;top:659px;width:154.75px;padding-right:2.5px;text-align:right;">134.112</div>
<div class="c" style="left:1184.5px;top:659px;width:714.0px;padding-left:4px;letter-spacing:0.11px;">https<i>://</i>weather.com<i>/</i>ut<i>/</i>odio<i>/</i>cras.jsp?eu=ac&amp;massa=tellus&amp;donec=semper&amp;dapibus=nulla&amp;in</div>
<div class="c" style="left:44px;top:679px;width:164px;padding-left:4px;letter-spacing:0.25px;">731-86-0436</div>
<div class="c" style="left:313.5px;top:679px;width:191.25px;padding-left:4px;">Nickoll</div>
<div class="c" style="left:505.75px;top:679px;width:397.0px;padding-left:4px;">gnickoll1b@businessinsider.com</div>
<div class="c" style="left:903.75px;top:679px;width:124.0px;padding-left:4px;">Male</div>
<div class="c" style="left:1028.75px;top:679px;width:154.75px;padding-right:2.5px;text-align:right;">103.25</div>
<div class="c" style="left:1184.5px;top:679px;width:714.0px;padding-left:4px;letter-spacing:0.11px;">https<i>://</i>geocities.jp<i>/</i>in<i>/</i>tempor<i>/</i>turpis<i>/</i>nec<i>/</i>euismod<i>/</i>scelerisque<i>/</i>quam.html?odio=sit&amp;justo=in</div>
<div class="c" style="left:44px;top:699px;width:164px;padding-left:4px;letter-spacing:0.25px;">232-39-0458</div>
<div class="c" style="left:313.5px;top:699px;width:191.25px;padding-left:4px;">Dommerque</div>
<div class="c" style="left:505.75px;top:699px;width:397.0px;padding-left:4px;">edommerque1c@mashable.com</div>
<div class="c" style="left:903.75px;top:699px;width:124.0px;padding-left:4px;">Male</div>
<div class="c" style="left:1028.75px;top:699px;width:154.75px;padding-right:2.5px;text-align:right;">20.49</div>
<div class="c" style="left:1184.5px;top:699px;width:714.0px;padding-left:4px;letter-spacing:0.11px;">https<i>://</i>people.com.cn<i>/</i>habitasse.xml?ante=aliquam&amp;ipsum=augue&amp;primis=quam&amp;in=nulla&amp;at</div>
<div class="c" style="left:44px;top:719px;width:164px;padding-left:4px;letter-spacing:0.25px;">383-93-9922</div>
<div class="c" style="left:313.5px;top:719px;width:191.25px;padding-left:4px;">Stroband</div>
<div class="c" style="left:505.75px;top:719px;width:397.0px;padding-left:4px;">nstroband1e@mapquest.com</div>
<div class="c" style="left:903.75px;top:719px;width:124.0px;padding-left:4px;">Male</div>
<div class="c" style="left:1028.75px;top:719px;width:154.75px;padding-right:2.5px;text-align:right;">157.44</div>
<div class="c" style="left:1184.5px;top:719px;width:714.0px;padding-left:4px;letter-spacing:0.11px;">https<i>://</i>telegraph.co.uk<i>/</i>ut<i>/</i>mauris.xml?sapien=nulla&amp;urna=ut&amp;pretium=erat&amp;nisl=id&amp;nulla=in</div>
<div class="c" style="left:44px;top:739px;width:164px;padding-left:4px;letter-spacing:0.25px;">695-43-3683</div>
<div class="c" style="left:313.5px;top:739px;width:191.25px;padding-left:4px;">Gladdis</div>
<div class="c" style="left:505.75px;top:739px;width:397.0px;padding-left:4px;">hgladdis1g@tiny.cc</div>
<div class="c" style="left:903.75px;top:739px;width:124.0px;padding-left:4px;">Male</div>
<div class="c" style="left:1028.75px;top:739px;width:154.75px;padding-right:2.5px;text-align:right;">62.218</div>
<div class="c" style="left:1184.5px;top:739px;width:714.0px;padding-left:4px;letter-spacing:0.11px;">http<i>://</i>narod.ru<i>/</i>massa<i>/</i>tempor<i>/</i>convallis<i>/</i>nulla<i>/</i>neque<i>/</i>libero<i>/</i>convallis.html?facilisi=nunc&amp;in=at</div>
<div class="c" style="left:44px;top:759px;width:164px;padding-left:4px;letter-spacing:0.25px;">646-52-5042</div>
<div class="c" style="left:313.5px;top:759px;width:191.25px;padding-left:4px;">Brandel</div>
<div class="c" style="left:505.75px;top:759px;width:397.0px;padding-left:4px;">tbrandel1h@scribd.com</div>
<div class="c" style="left:903.75px;top:759px;width:124.0px;padding-left:4px;">Male</div>
<div class="c" style="left:1028.75px;top:759px;width:154.75px;padding-right:2.5px;text-align:right;">33.187</div>
<div class="c" style="left:1184.5px;top:759px;width:714.0px;padding-left:4px;letter-spacing:0.11px;">https<i>://</i>lycos.com<i>/</i>nunc<i>/</i>viverra<i>/</i>dapibus<i>/</i>nulla<i>/</i>suscipit<i>/</i>ligula.json?neque=nunc&amp;libero=nulla</div>
<div class="c" style="left:44px;top:779px;width:164px;padding-left:4px;letter-spacing:0.25px;">153-73-2250</div>
<div class="c" style="left:313.5px;top:779px;width:191.25px;padding-left:4px;">Blakeley</div>
<div class="c" style="left:505.75px;top:779px;width:397.0px;padding-left:4px;">dblakeley1i@dmoz.org</div>
<div class="c" style="left:903.75px;top:779px;width:124.0px;padding-left:4px;">Male</div>
<div class="c" style="left:1028.75px;top:779px;width:154.75px;padding-right:2.5px;text-align:right;">181.14</div>
<div class="c" style="left:1184.5px;top:779px;width:714.0px;padding-left:4px;letter-spacing:0.11px;">https<i>://</i>hibu.com<i>/</i>ligula<i>/</i>in<i>/</i>lacus<i>/</i>curabitur<i>/</i>at<i>/</i>ipsum.png?ultrices=posuere&amp;cubilia=curae&amp;nulla=dapibus</div>
<div class="abs" style="left:43px;top:78px;width:167px;height:22px;border:2px solid #217346"></div>
<div class="abs" style="left:204.500px;top:95px;width:7px;height:7px;background:#217346;box-shadow:0 0 0 1px #fff"></div>
</div>
<div class="abs" style="left:1898.5px;top:175px;width:21.5px;height:783px;background:#d6d6d6"></div>
<div class="abs" style="left:1902px;top:175px;width:18px;height:783px;background:#dedede"></div>
<div class="abs" style="left:1901.500px;top:175.500px;width:15px;height:15px;background:#fff;border:1px solid #c6c6c6"></div>
<svg class="ico" style="left:1906px;top:181px" width="7" height="5" viewBox="0 0 7 5"><path d="M0 5h7l-3.500-5z" fill="#444"/></svg>
<div class="abs" style="left:1902.5px;top:694px;width:14px;height:14px;background:#fff;border:1px solid #c6c6c6"></div>
<div class="abs" style="left:1902.5px;top:944px;width:14px;height:12px;background:#fff;border:1px solid #c6c6c6"></div>
<svg class="ico" style="left:1906px;top:948px" width="7" height="5" viewBox="0 0 7 5"><path d="M0 0h7l-3.500 5z" fill="#444"/></svg>
<div class="abs" style="left:0;top:957.5px;width:1920px;height:28px;background:#e6e6e6;border-top:1px solid #c6c6c6"></div>
<svg class="ico" style="left:26px;top:967px" width="6" height="9" viewBox="0 0 6 9"><path d="M5 0.500l-4 4 4 4" fill="none" stroke="#b3b0ad" stroke-width="1.3"/></svg>
<svg class="ico" style="left:54px;top:967px" width="6" height="9" viewBox="0 0 6 9"><path d="M1 0.500l4 4-4 4" fill="none" stroke="#b3b0ad" stroke-width="1.3"/></svg>
<div class="abs" style="left:98px;top:958px;width:149px;height:25px;background:#fff;border-bottom:2.500px solid #217346;text-align:center;line-height:29px;font-size:12.5px;letter-spacing:0.2px;font-weight:bold;color:#217346">Verylongsheetname</div>
<svg class="ico" style="left:277px;top:963px" width="17" height="17" viewBox="0 0 17 17"><circle cx="8.5" cy="8.5" r="7.500" fill="none" stroke="#605e5c" stroke-width="1.2"/><path d="M8.500 4.500v8M4.500 8.500h8" stroke="#605e5c" stroke-width="1.2"/></svg>
<div class="abs" style="left:963px;top:964px;width:2px;height:2px;background:#a19f9d;box-shadow:0 5px 0 #a19f9d,0 10px 0 #a19f9d"></div>
<div class="abs" style="left:977px;top:964px;width:17px;height:15px;background:#fff;border:1px solid #c6c6c6"></div>
<svg class="ico" style="left:983px;top:968px" width="5" height="7" viewBox="0 0 5 7"><path d="M5 0v7l-5-3.500z" fill="#444"/></svg>
<div class="abs" style="left:995px;top:964.500px;width:903px;height:16.500px;background:#d8d8d8"></div>
<div class="abs" style="left:1832px;top:964px;width:18px;height:15px;background:#fff;border:1px solid #c6c6c6"></div>
<div class="abs" style="left:1884px;top:964px;width:13px;height:15px;background:#fff;border:1px solid #c6c6c6"></div>
<svg class="ico" style="left:1888px;top:968px" width="5" height="7" viewBox="0 0 5 7"><path d="M0 0v7l5-3.500z" fill="#444"/></svg>
<div class="abs" style="left:0;top:985.5px;width:1920px;height:23px;background:#f3f2f1"></div>
<div class="lt" style="left:6px;top:990.500px;font-size:11px;color:#605e5c">Scroll Lock</div>
<div class="abs" style="left:1620.500px;top:986px;width:39px;height:22px;background:#c8c6c4"></div>
<svg class="ico" style="left:1633px;top:989px" width="14" height="14" viewBox="0 0 14 14" transform="translate(0,0)"><path d="M1 1h5v5h-5zM8 1h5v5h-5zM1 8h5v5h-5zM8 8h5v5h-5z" fill="#444"/></svg>
<svg class="ico" style="left:1673px;top:989px" width="14" height="14" viewBox="0 0 14 14"><rect x="1.500" y="1.500" width="11" height="11" fill="none" stroke="#605e5c"/><path d="M4.500 1.500v11M9.500 1.500v11M1.500 4.500h11" fill="none" stroke="#8a8886"/></svg>
<svg class="ico" style="left:1713px;top:989px" width="14" height="14" viewBox="0 0 14 14"><path d="M1.500 1.500h11v11h-11zM1.500 6.500h6v6M7.500 1.500v5h5" fill="none" stroke="#605e5c"/></svg>
<div class="abs" style="left:1746px;top:996px;width:9px;height:1px;background:#605e5c"></div>
<div class="abs" style="left:1760px;top:996px;width:98px;height:1px;background:#a19f9d"></div>
<div class="abs" style="left:1810px;top:990px;width:4px;height:13px;background:#605e5c"></div>
<div class="abs" style="left:1863px;top:996px;width:9px;height:1px;background:#605e5c"></div><div class="abs" style="left:1867px;top:992px;width:1px;height:9px;background:#605e5c"></div>
<div class="lt" style="left:1886px;top:989px;font-size:11px;color:#605e5c">120%</div>
</div></body></html>
